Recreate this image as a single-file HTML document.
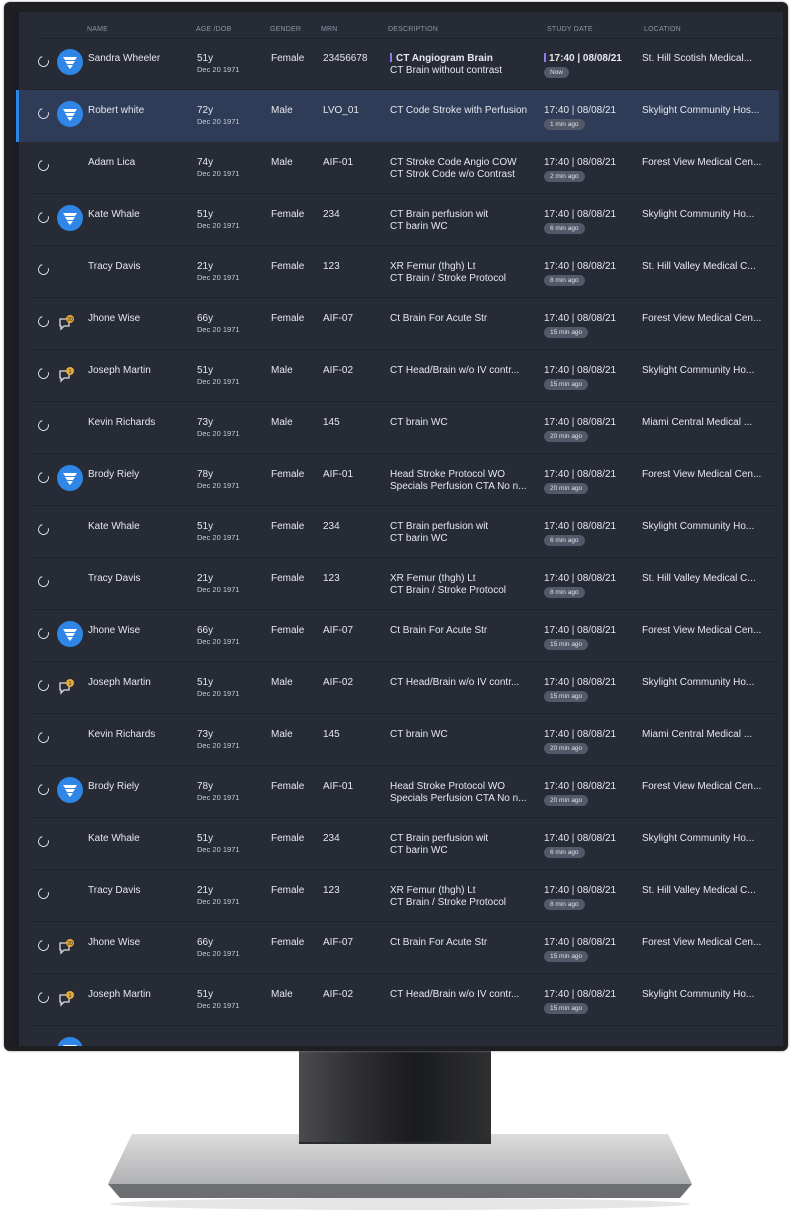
<!DOCTYPE html><html><head><style>
*{margin:0;padding:0;box-sizing:border-box}
body{width:800px;height:1220px;background:#fff;position:relative;overflow:hidden;font-family:"Liberation Sans",sans-serif}
.bezel{position:absolute;left:4px;top:2px;width:784px;height:1049px;background:#1d1f23;border-radius:6px;box-shadow:0 0 2px #888}
.screen{position:absolute;left:10px;top:10px;width:769px;height:1034px;background:#272b36;overflow:hidden}
.strip{position:absolute;left:0;top:0;width:5px;height:100%;background:#1a1d24}
.hdr{position:absolute;top:14px;font-size:7px;color:#8f95a3;letter-spacing:.2px}
.hline{position:absolute;left:26px;width:740px;top:26px;height:1px;background:#1f222b}
.row{position:absolute;left:5px;width:760px;height:52px}
.row.sel{background:#2f3c58}
.row.sel:before{content:"";position:absolute;left:-3px;top:0;width:3px;height:52px;background:#2a86ea}
.sep{position:absolute;left:10px;right:0;bottom:0;height:1px;background:#1f222b}
.t{position:absolute;font-size:10px;color:#e6e8ec;white-space:nowrap}
.s{position:absolute;font-size:7.5px;color:#c9ccd3;white-space:nowrap}
.pill{position:absolute;left:525px;top:29px;height:11px;padding:0 6px;border-radius:6px;background:#535968;font-size:6.5px;line-height:11px;color:#dfe2e7}
.spin{position:absolute;left:19px;top:18px;width:11px;height:11px;border:1.6px solid #d8dbe0;border-top-color:transparent;border-radius:50%;transform:rotate(30deg)}
.av{position:absolute;left:38px;top:11px;width:26px;height:26px;border-radius:50%;background:#2f86e6}
.msg{position:absolute;left:40px;top:17px}
.neck{position:absolute;left:299px;top:1050px;width:192px;height:92px;background:linear-gradient(90deg,#4a4b4d,#2e2f31 30%,#1a1b1d 60%,#2e2f31);}
</style></head><body>
<svg style="position:absolute;left:0;top:1120px" width="800" height="100">
<defs><linearGradient id="g" x1="0" y1="0" x2="0" y2="1"><stop offset="0" stop-color="#dcdcdd"/><stop offset="1" stop-color="#b0b1b3"/></linearGradient></defs>
<ellipse cx="400" cy="84" rx="290" ry="6" fill="#ccc" opacity=".5"/>
<polygon points="132,14 668,14 692,64 108,64" fill="url(#g)"/>
<polygon points="108,64 692,64 680,78 120,78" fill="#6d6e71"/>
<rect x="299" y="14" width="192" height="10" fill="#2a2b2d"/>
</svg>
<div class="neck"></div>
<div class="bezel"><div class="screen"><div class="strip"></div>
<div class="hdr" style="left:73px">NAME</div><div class="hdr" style="left:182px">AGE /DOB</div><div class="hdr" style="left:256px">GENDER</div><div class="hdr" style="left:307px">MRN</div><div class="hdr" style="left:374px">DESCRIPTION</div><div class="hdr" style="left:533px">STUDY DATE</div><div class="hdr" style="left:630px">LOCATION</div>
<div class="hline"></div>
<div id="rows"></div>
</div></div>
<script>
var V='<div class="av"><svg width="26" height="26" viewBox="0 0 26 26"><path d="M6 8h14l-2 3H8zM8 12h10l-2 3h-6zM10 16h6l-3 4z" fill="#fff"/></svg></div>';
function M(n){return '<div class="msg"><svg width="18" height="16" viewBox="0 0 18 16"><path d="M1 4h9v7H5l-3 3v-3H1z" fill="none" stroke="#ddd" stroke-width="1.3"/><circle cx="11" cy="4" r="4" fill="#e6a93b"/><text x="11" y="6" font-size="5" text-anchor="middle" fill="#222" font-family="Liberation Sans">'+n+'</text></svg></div>';}
var d=[
[V,"Sandra Wheeler","51y","Female","23456678","CT Angiogram Brain","CT Brain without contrast","Now","St. Hill Scotish Medical..."],
[V,"Robert white","72y","Male","LVO_01","CT Code Stroke with Perfusion","","1 min ago","Skylight Community Hos..."],
["","Adam Lica","74y","Male","AIF-01","CT Stroke Code Angio COW","CT Strok Code w/o Contrast","2 min ago","Forest View Medical Cen..."],
[V,"Kate Whale","51y","Female","234","CT Brain perfusion wit","CT barin WC","6 min ago","Skylight Community Ho..."],
["","Tracy Davis","21y","Female","123","XR Femur (thgh) Lt","CT Brain / Stroke Protocol","8 min ago","St. Hill Valley Medical C..."],
[M(20),"Jhone Wise","66y","Female","AIF-07","Ct Brain For Acute Str","","15 min ago","Forest View Medical Cen..."],
[M(1),"Joseph Martin","51y","Male","AIF-02","CT Head/Brain w/o IV contr...","","15 min ago","Skylight Community Ho..."],
["","Kevin Richards","73y","Male","145","CT brain WC","","20 min ago","Miami Central Medical ..."],
[V,"Brody Riely","78y","Female","AIF-01","Head Stroke Protocol WO","Specials Perfusion CTA No n...","20 min ago","Forest View Medical Cen..."],
["","Kate Whale","51y","Female","234","CT Brain perfusion wit","CT barin WC","6 min ago","Skylight Community Ho..."],
["","Tracy Davis","21y","Female","123","XR Femur (thgh) Lt","CT Brain / Stroke Protocol","8 min ago","St. Hill Valley Medical C..."],
[V,"Jhone Wise","66y","Female","AIF-07","Ct Brain For Acute Str","","15 min ago","Forest View Medical Cen..."],
[M(1),"Joseph Martin","51y","Male","AIF-02","CT Head/Brain w/o IV contr...","","15 min ago","Skylight Community Ho..."],
["","Kevin Richards","73y","Male","145","CT brain WC","","20 min ago","Miami Central Medical ..."],
[V,"Brody Riely","78y","Female","AIF-01","Head Stroke Protocol WO","Specials Perfusion CTA No n...","20 min ago","Forest View Medical Cen..."],
["","Kate Whale","51y","Female","234","CT Brain perfusion wit","CT barin WC","6 min ago","Skylight Community Ho..."],
["","Tracy Davis","21y","Female","123","XR Femur (thgh) Lt","CT Brain / Stroke Protocol","8 min ago","St. Hill Valley Medical C..."],
[M(20),"Jhone Wise","66y","Female","AIF-07","Ct Brain For Acute Str","","15 min ago","Forest View Medical Cen..."],
[M(1),"Joseph Martin","51y","Male","AIF-02","CT Head/Brain w/o IV contr...","","15 min ago","Skylight Community Ho..."],
[V,"","","","","","","",""]];
var h="";
d.forEach(function(r,i){
var top=26+52*i;var f=i==0;
h+='<div class="row'+(i==1?' sel':'')+'" style="top:'+top+'px">'+(i!=1&&i<19?'<div class="sep"></div>':'')+(i<19?'<div class="spin"></div>':'')+r[0];
if(r[1]){
h+='<div class="t" style="left:69px;top:15px">'+r[1]+'</div>';
h+='<div class="t" style="left:178px;top:15px">'+r[2]+'</div><div class="s" style="left:178px;top:27px">Dec 20 1971</div>';
h+='<div class="t" style="left:252px;top:15px">'+r[3]+'</div><div class="t" style="left:304px;top:15px">'+r[4]+'</div>';
h+='<div class="t" style="left:371px;top:15px;'+(f?'font-weight:bold':'')+'">'+(f?'<span style="display:inline-block;width:2px;height:9px;background:#8d7df0;margin-right:4px;vertical-align:-1px"></span>':'')+r[5]+'</div>';
if(r[6])h+='<div class="t" style="left:371px;top:27px">'+r[6]+'</div>';
h+='<div class="t" style="left:525px;top:15px;'+(f?'font-weight:bold':'')+'">'+(f?'<span style="display:inline-block;width:2px;height:9px;background:#8d7df0;margin-right:3px;vertical-align:-1px"></span>':'')+'17:40 | 08/08/21</div>';
h+='<div class="pill">'+r[7]+'</div><div class="t" style="left:623px;top:15px">'+r[8]+'</div>';}
h+='</div>';});
document.getElementById("rows").innerHTML=h;
</script>
</body></html>
